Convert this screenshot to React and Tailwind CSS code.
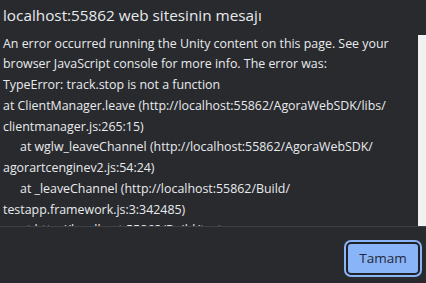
const lines = [
  { t: "An error occurred running the Unity content on this page. See your" },
  { t: "browser JavaScript console for more info. The error was:" },
  { t: "TypeError: track.stop is not a function" },
  { t: "at ClientManager.leave (http://localhost:55862/AgoraWebSDK/libs/" },
  { t: "clientmanager.js:265:15)" },
  { t: "at wglw_leaveChannel (http://localhost:55862/AgoraWebSDK/", i: true },
  { t: "agorartcenginev2.js:54:24)" },
  { t: "at _leaveChannel (http://localhost:55862/Build/", i: true },
  { t: "testapp.framework.js:3:342485)" },
  { t: "at http://localhost:55862/Build/testapp.wasm:wasm-", i: true },
];

export default function App() {
  return (
    <div
      className="w-[426px] h-[283px] bg-[#292a2d] text-[#e8eaed] overflow-hidden flex flex-col"
      style={{ fontFamily: "'Open Sans', 'Noto Sans', sans-serif" }}
    >
      <div className="h-[35px] pl-[3px] pt-[5px] text-[15.3px] leading-[20px]">
        localhost:55862 web sitesinin mesajı
      </div>
      <div className="h-[191px] flex">
        <div className="flex-1 overflow-hidden pl-[3px] text-[12.4px] leading-[20.75px] whitespace-nowrap">
          <div className="-mt-[1.5px]">
            {lines.map((l, k) => (
              <div key={k} className={l.i ? "pl-[17px]" : ""}>
                {l.t}
              </div>
            ))}
          </div>
        </div>
        <div className="w-[8px] bg-[#f1f1f1]" />
      </div>
      <div className="h-px bg-[#3f4044]" />
      <div className="flex-1 flex justify-end items-start pt-[15px] pr-[6px]">
        <button className="w-[74px] h-[33px] rounded-[5px] bg-[#8ab4f8] text-[#1f2937] text-[13.5px] border-2 border-[#202124] outline-2 outline-[#8ab4f8]">
          Tamam
        </button>
      </div>
    </div>
  );
}
